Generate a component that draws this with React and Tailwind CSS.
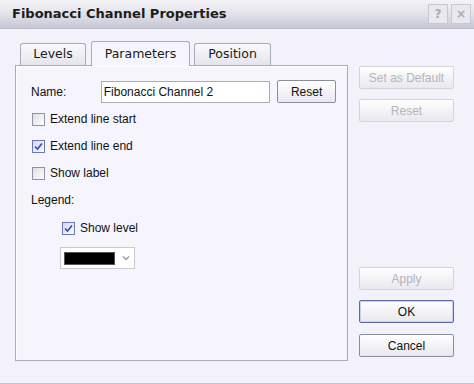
import React, { useState } from "react";

const ui = { fontFamily: '"Liberation Sans", Arial, sans-serif' };
const tah = { fontFamily: '"DejaVu Sans", Verdana, sans-serif' };

const Check = ({ checked, label, onChange }) => {
    return (
        <label className="flex items-center gap-[5px] h-[16px] cursor-default select-none" onClick={onChange}>
            <span
                className={
                    "w-[13px] h-[13px] border flex items-center justify-center bg-gradient-to-br " +
                    (checked ? "border-[#6a78b8] from-[#d4d8f0] to-[#ffffff]" : "border-[#8c92a8] from-[#dcdce4] to-[#ffffff]")
                }
            >
                {checked ? (
                    <svg width="9" height="9" viewBox="0 0 9 9">
                        <path d="M1 4.5 L3.5 7 L8 1.5" stroke="#2b48c8" strokeWidth="1.6" fill="none" />
                    </svg>
                ) : null}
            </span>
            <span className="text-[12px] leading-[16px] text-[#111]">{label}</span>
        </label>
    );
};

const Btn = ({ children, disabled, primary, className }) => {
    return (
        <button
            type="button"
            className={
                "h-[23px] text-[12px] rounded-[2px] border bg-gradient-to-b from-[#ffffff] to-[#e8e8ee] " +
                (disabled ? "border-[#d4d4de] text-[#b4b4bc] " : primary ? "border-[#5a6aa8] text-[#111] shadow-[inset_0_0_0_1px_#c8d0f0] " : "border-[#8a8f9e] text-[#111] ") +
                (className || "")
            }
        >
            {children}
        </button>
    );
};

export default function App() {
    const [start, setStart] = useState(false);
    const [end, setEnd] = useState(true);
    const [label, setLabel] = useState(false);
    const [level, setLevel] = useState(true);

    return (
        <div className="w-[474px] h-[384px] bg-[#f3f2fa] flex flex-col overflow-hidden border-b border-[#c4c4d0]" style={ui}>
            {/* title bar */}
            <div className="h-[29px] shrink-0 flex items-center justify-between pl-[12px] pr-[3px] bg-gradient-to-b from-[#f4f4f8] via-[#e2e2ea] to-[#c6c7d6] border-b border-[#b8b9c8]">
                <span className="text-[13px] font-bold text-[#1c1c1c]" style={tah}>Fibonacci Channel Properties</span>
                <div className="flex gap-[3px]">
                    <div className="w-[20px] h-[20px] border border-[#c8c8d4] bg-[#e8e8ee] flex items-center justify-center text-[12px] font-bold text-[#a8a8b4]" style={tah}>?</div>
                    <div className="w-[20px] h-[20px] border border-[#c8c8d4] bg-[#e8e8ee] flex items-center justify-center text-[12px] font-bold text-[#a8a8b4]" style={tah}>×</div>
                </div>
            </div>

            <div className="flex flex-1 pt-[11px] pl-[15px] pr-[20px]">
                {/* left: tabs + panel */}
                <div className="w-[333px] flex flex-col">
                    <div className="flex items-end h-[25px] pl-[5px] text-[12.5px] text-[#1a1a1a]" style={tah}>
                        <div className="w-[66px] h-[22px] border border-b-0 border-[#a8abb8] rounded-t-[3px] bg-gradient-to-b from-[#fafafc] to-[#e4e4ec] flex items-center justify-center">Levels</div>
                        <div className="w-[99px] h-[25px] ml-[5px] -mb-px border border-b-0 border-[#a8abb8] rounded-t-[3px] bg-[#f6f5fd] flex items-center justify-center z-10 relative">Parameters</div>
                        <div className="w-[77px] h-[22px] ml-[4px] border border-b-0 border-[#a8abb8] rounded-t-[3px] bg-gradient-to-b from-[#fafafc] to-[#e4e4ec] flex items-center justify-center">Position</div>
                    </div>
                    <div className="h-[296px] border border-[#a8abb8] bg-[#f6f5fd] shadow-[inset_1px_1px_0_#ffffff] pl-[15px] pt-[14px] pr-[11px] text-[12px]">
                        <div className="flex items-center">
                            <span className="w-[70px] text-[#111]">Name:</span>
                            <input
                                defaultValue="Fibonacci Channel 2"
                                className="w-[170px] h-[22px] border border-[#a5acb5] bg-white px-[2px] text-[12px] text-[#111] outline-none"
                                style={ui}
                            />
                            <Btn className="w-[59px] ml-[7px]">Reset</Btn>
                        </div>
                        <div className="flex flex-col gap-[11px] mt-[8px] pl-[1px]">
                            <Check checked={start} label="Extend line start" onChange={() => setStart(!start)} />
                            <Check checked={end} label="Extend line end" onChange={() => setEnd(!end)} />
                            <Check checked={label} label="Show label" onChange={() => setLabel(!label)} />
                        </div>
                        <div className="mt-[11px] leading-[16px] text-[#111]">Legend:</div>
                        <div className="pl-[31px] mt-[12px]">
                            <Check checked={level} label="Show level" onChange={() => setLevel(!level)} />
                            <div className="mt-[11px] -ml-[2px] w-[75px] h-[22px] border border-[#c8cad4] bg-white flex items-center pl-[3px] gap-[7px]">
                                <div className="w-[51px] h-[13px] bg-black border border-[#555]"></div>
                                <svg width="8" height="6" viewBox="0 0 8 6">
                                    <path d="M1 1.5 L4 4.5 L7 1.5" stroke="#9a9aa6" strokeWidth="1.4" fill="none" />
                                </svg>
                            </div>
                        </div>
                    </div>
                </div>

                {/* right buttons */}
                <div className="flex flex-col ml-[11px] w-[95px] pt-[26px] pb-[26px]">
                    <Btn disabled>Set as Default</Btn>
                    <Btn disabled className="mt-[10px]">Reset</Btn>
                    <div className="flex-1"></div>
                    <Btn disabled>Apply</Btn>
                    <Btn primary className="mt-[10px]">OK</Btn>
                    <Btn className="mt-[11px]">Cancel</Btn>
                </div>
            </div>
        </div>
    );
}
